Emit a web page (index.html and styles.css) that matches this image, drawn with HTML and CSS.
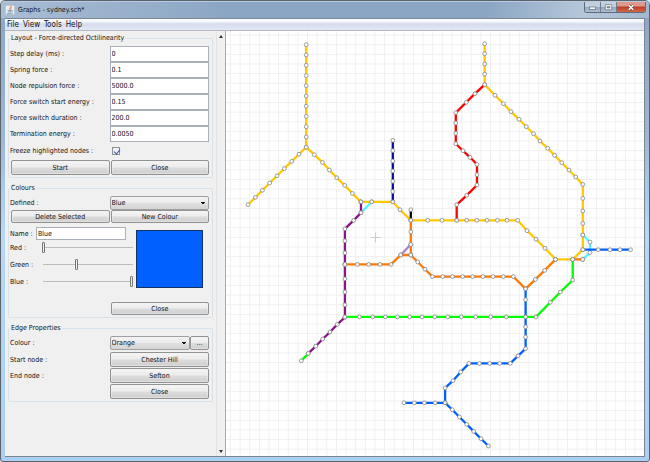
FILE: index.html
```html
<!DOCTYPE html>
<html lang="en">
<head>
<meta charset="utf-8">
<title>Graphs - sydney.sch*</title>
<link rel="stylesheet" href="styles.css">
</head>
<body>
<div class="window">
  <header class="titlebar">
    <svg class="app-icon" viewBox="0 0 10 10" aria-hidden="true">
      <rect x="0.5" y="0.5" width="9" height="9" fill="#e9eef4" stroke="#b9c6d4"/>
      <path d="M5.6 1C6.6 2.2 3.8 2.8 4.8 4.8M6.6 2.6C5.4 3.4 6 4 5.6 4.8" fill="none" stroke="#e8803a"/>
      <path d="M2.6 5.6h4.2M3 6.8h3.4M6.8 5.4c1.4 0 1 1.2-.2 1.4M2 8.4h5.6" fill="none" stroke="#6d8fae" stroke-width="0.8"/>
    </svg>
    <h1 class="title">Graphs - sydney.sch*</h1>
    <div class="controls">
      <button class="control" type="button" aria-label="Minimize"><svg viewBox="0 0 16 11"><rect x="4.5" y="5.5" width="7" height="2.5" fill="#fff" stroke="#56606e" stroke-width="0.7"/></svg></button>
      <button class="control" type="button" aria-label="Maximize"><svg viewBox="0 0 16 11"><path d="M4.5 3h7v5.5h-7zM6.5 5v1.5h3V5z" fill="#fff" fill-rule="evenodd" stroke="#56606e" stroke-width="0.7"/></svg></button>
      <button class="control control-close" type="button" aria-label="Close window"><svg viewBox="0 0 28 11"><path d="M11.5 3.5l5 5M16.5 3.5l-5 5" stroke="#5d4a55" stroke-width="3"/><path d="M11.5 3.5l5 5M16.5 3.5l-5 5" stroke="#fff" stroke-width="1.7"/></svg></button>
    </div>
  </header>
  <div class="client">
    <nav class="menubar">
      <button type="button">File</button>
      <button type="button">View</button>
      <button type="button">Tools</button>
      <button type="button">Help</button>
    </nav>
    <main class="workspace">
      <aside class="sidebar">
        <form class="panels">
          <fieldset class="group">
            <legend>Layout - Force-directed Octilinearity</legend>
            <div class="field"><label for="delay">Step delay (ms) :</label><input id="delay" type="text" value="0"></div>
            <div class="field"><label for="spring">Spring force :</label><input id="spring" type="text" value="0.1"></div>
            <div class="field"><label for="repulsion">Node repulsion force :</label><input id="repulsion" type="text" value="5000.0"></div>
            <div class="field"><label for="energy">Force switch start energy :</label><input id="energy" type="text" value="0.15"></div>
            <div class="field"><label for="duration">Force switch duration :</label><input id="duration" type="text" value="200.0"></div>
            <div class="field"><label for="termination">Termination energy :</label><input id="termination" type="text" value="0.0050"></div>
            <div class="field field-check"><label for="freeze">Freeze highlighted nodes :</label><input id="freeze" type="checkbox" checked></div>
            <div class="pair"><button class="btn" type="button">Start</button><button class="btn" type="button">Close</button></div>
          </fieldset>

          <fieldset class="group">
            <legend>Colours</legend>
            <div class="field field-select"><label for="defined">Defined :</label><select id="defined"><option>Blue</option></select></div>
            <div class="pair pair-short"><button class="btn" type="button">Delete Selected</button><button class="btn" type="button">New Colour</button></div>
            <div class="mixer">
              <div class="channels">
                <div class="channel channel-name"><label for="name">Name :</label><input id="name" type="text" value="Blue"></div>
                <div class="channel"><label for="red">Red :</label><input id="red" type="range" min="0" max="255" value="0"></div>
                <div class="channel"><label for="green">Green :</label><input id="green" type="range" min="0" max="255" value="96"></div>
                <div class="channel"><label for="blue">Blue :</label><input id="blue" type="range" min="0" max="255" value="255"></div>
              </div>
              <div class="swatch"></div>
            </div>
            <div class="pair pair-short"><span></span><button class="btn" type="button">Close</button></div>
          </fieldset>

          <fieldset class="group">
            <legend>Edge Properties</legend>
            <div class="field field-select"><label for="edge-colour">Colour :</label><div class="picker"><select id="edge-colour"><option>Orange</option></select><button class="btn btn-more" type="button">...</button></div></div>
            <div class="actions">
              <span>Start node :</span><button class="btn" type="button">Chester Hill</button>
              <span>End node :</span><button class="btn" type="button">Sefton</button>
              <span></span><button class="btn" type="button">Close</button>
            </div>
          </fieldset>
        </form>
        <div class="scroller">
          <svg viewBox="0 0 4 3" aria-hidden="true"><path d="M0 3L2 0l2 3z"/></svg>
          <svg viewBox="0 0 4 3" aria-hidden="true"><path d="M0 0l2 3 2-3z"/></svg>
        </div>
      </aside>
      <section class="canvas">
        <svg viewBox="226 31 419 425" preserveAspectRatio="xMinYMin slice" role="img" aria-label="Sydney rail network graph">
          <defs>
            <pattern id="grid" x="230" y="34.6" width="9.63" height="9.63" patternUnits="userSpaceOnUse">
              <path d="M0.5 0v9.63M0 0.5h9.63" stroke="#f0f0f0" fill="none"/>
            </pattern>
            <marker id="station" viewBox="-3 -3 6 6" markerWidth="6" markerHeight="6" markerUnits="userSpaceOnUse">
              <circle r="1.9" fill="#fff" stroke="#858585" stroke-width="0.8"/>
            </marker>
          </defs>
          <rect x="226" y="31" width="419" height="425" fill="url(#grid)"/>
          <path class="centre" d="M370.5 237.5h10M375.5 232.5v10"/>
          <g class="route">
            <path class="cyan" d="M361 212.7L371.7 201.8"/>
            <path class="mauve" d="M400.7 255L410.8 244.5"/>
            <path class="cyan" d="M582.8 235L590 242V252.6L582.8 259.4"/>
            <path class="blue" d="M582.8 249.7H598.3H610H620H630.6"/>
            <path class="yellow" d="M306.2 44.7V55V65.3V75.6V85.7V96V106.2V116.4V126.7V137V147.2L314.3 154.7L322.4 162.4L329.4 170L336.7 177.7L344.7 185.4L352.4 193.4L360.8 201.8H371.7H392.8L400 209.7L410.8 220.3H427.8H442H456.8H466.7H476.8H487H497.4H507H517.7L527 230.7L536 239.2L545 248.2L555.5 259.4H572.7L582.8 249.7V235V223.4V211V198.4V184.4L575.7 177L569 170L561.8 162.7L554.7 155.4L547.7 148.3L540 141L533.5 133.7L526.3 126.7L519 119.3L511 111.7L503.4 103.7L495 95.3L484.7 84.7V74.2V64V53.7V43.7"/>
            <path class="yellow" d="M306.2 147.2L299 154.2L291.7 161.4L284.3 168.6L277 175.8L269.7 183L262.4 190.3L255.4 197.4L248 204.7"/>
            <path class="red" d="M484.7 84.7L475 93.7L466.3 102.3L455.8 112.7V123V133.3V143.7L463 150.7L470 157.3L477 164.4V174.7V185L466.7 195.3L456.7 204.7V220.3"/>
            <path class="navy" d="M392.8 140.3V150.6V161V171V181.3V191.5V201.8"/>
            <path class="black" d="M410.8 209.7V220.3"/>
            <path class="purple" d="M361 201.8V212.7L353.7 220.4L344.9 228.8V240.8V252.8V264.4V278.8V292V304.8V317.3L337.3 324.4L330 332L322.7 339L315.7 346.2L308.3 353.4"/>
            <path class="green" d="M308.3 353.4L301.3 360.8"/>
            <path class="orange" d="M344.9 264.4H357.4H368.7H380H391L400.7 255H410.8L417.7 262L425 269.2L432.4 276.6H442.7H452.4H462.7H472.7H483H493H503.3H513.3L525.6 288.8L535.4 279.4L544.7 270.4L555.5 259.4"/>
            <path class="orange" d="M410.8 220.3V231.8V244.5V255"/>
            <path class="orange" d="M572.7 259.4H582.8"/>
            <path class="green" d="M572.7 259.4V280L560.4 292L550.3 302.3L536 316.9H525.6H506.3H490.7H475.7H461.3H447.7H434.7H422H409.7H397.4H385.4H372.7H359.4H344.9"/>
            <path class="blue" d="M525.6 288.8V299.7V316.9V326.8V337V348.7L518 355.9L510.3 363.4H499.7H489.7H479.4H469L460.7 372L453 380.7L445.1 388V402.8L452.3 409.7L459.4 417L466.7 424.3L473.7 431.4L481 438.7L488.4 446"/>
            <path class="blue" d="M445.1 402.8H435.2H424.4H414.3H404"/>
          </g>
          <g class="junctions">
            <circle cx="582.8" cy="249.7" r="1.9"/><circle cx="555.5" cy="259.4" r="1.9"/>
            <circle cx="410.8" cy="255" r="1.9"/><circle cx="344.9" cy="264.4" r="1.9"/>
          </g>
        </svg>
      </section>
    </main>
  </div>
</div>
</body>
</html>
```
FILE: styles.css
```css
* { box-sizing: border-box; }

html, body { height: 100%; }

body {
  margin: 0;
  background: #dfe5ec;
  color: #111;
  font: 7px/10px "DejaVu Sans Condensed", "DejaVu Sans", sans-serif;
}

button, input, select { font: inherit; color: inherit; margin: 0; }

.window {
  display: flex;
  flex-direction: column;
  min-height: 100%;
  padding: 0 4px 4px;
  border: 1px solid #5d636b;
  border-radius: 5px 5px 3px 3px;
  background: linear-gradient(#8ba6c4 0, #9bb8d8 30%, #b4d8f8 50%, #a9d0f2 100%);
}

.titlebar {
  display: flex;
  align-items: center;
  height: 17px;
  margin: 0 -4px;
  padding-left: 4px;
  border-top: 1px solid #b8cbe0;
  border-radius: 4px 4px 0 0;
  background: linear-gradient(100deg, #a9bdd5 0, #8ba6c4 35%, #8ba6c4 75%, #b6c7da 90%, #a3b8d0 100%);
}

.app-icon { width: 10px; height: 10px; }

.title {
  margin: 0 auto 0 3px;
  font-size: 7px;
  font-weight: normal;
}

.controls {
  display: flex;
  align-self: flex-start;
  margin-right: 3px;
  border: 1px solid #5f6b7a;
  border-top: 0;
  border-radius: 0 0 3px 3px;
  overflow: hidden;
}

.control {
  display: block;
  width: 16px;
  height: 10px;
  padding: 0;
  border: 0;
  border-right: 1px solid #6f7c8d;
  background: linear-gradient(#c3d0df 45%, #92a5bb 50%, #adbfd2);
}

.control svg { display: block; width: 100%; height: 100%; }

.control-close {
  width: 28px;
  border-right: 0;
  background: linear-gradient(#dd9a8c 40%, #bd3d25 50%, #d2694c);
}

.client {
  display: flex;
  flex: 1;
  flex-direction: column;
  border: 1px solid #7b8794;
  border-left-width: 0;
  background: #f0f0f0;
}

.menubar {
  display: flex;
  gap: 4px;
  height: 12px;
  padding-left: 2px;
  border-bottom: 1px solid #b5b8be;
  background: linear-gradient(#fff 0, #f2f5fb 25%, #d6dcec 45%, #e0e7f5 100%);
  font-size: 8px;
}

.menubar button { padding: 0; border: 0; background: none; }

.workspace { display: flex; flex: 1; }

.sidebar { display: flex; flex: 0 0 220px; }

.panels {
  display: flex;
  flex: 1;
  flex-direction: column;
  gap: 5px;
  padding: 2px 3px 0;
}

.group {
  min-width: 0;
  margin: 0;
  padding: 3px 3px 2px 1px;
  border: 1px solid #d9e2e8;
  border-radius: 2px;
}

.group legend { margin-left: 0; padding: 0 1px; height: 10px; }

.field {
  display: grid;
  grid-template-columns: 1fr 1fr;
  align-items: center;
  height: 16px;
}

.field-check { height: 18px; }
.field-select { height: 14px; }

input[type="text"] {
  width: 100%;
  height: 100%;
  min-width: 0;
  padding: 0 1px;
  border: 1px solid #aab0b8;
  background: #fff;
}

input[type="checkbox"] {
  width: 8px;
  height: 8px;
  margin-left: 2px;
  appearance: none;
  border: 1px solid #8e8f8f;
  background: #eef1f6;
}

input[type="checkbox"]:checked::after {
  content: "";
  display: block;
  width: 3px;
  height: 5px;
  margin: 0 0 0 2px;
  border: solid #3f57a0;
  border-width: 0 1px 1px 0;
  transform: rotate(40deg);
}

.pair {
  display: grid;
  grid-template-columns: 1fr 1fr;
  gap: 1px;
  height: 15px;
  padding-left: 1px;
}

.pair-short { height: 13px; }

.btn {
  padding: 0;
  border: 1px solid #929292;
  border-radius: 2px;
  background: linear-gradient(#f4f4f4 0, #ececec 48%, #dcdcdc 52%, #cfcfcf 100%);
  box-shadow: inset 0 0 0 1px #f5f5f566;
  line-height: 8px;
}

select {
  width: 100%;
  height: 100%;
  padding: 0 1px;
  appearance: none;
  border: 1px solid #a0a0a0;
  border-radius: 2px;
  background:
    linear-gradient(to bottom right, #111 50%, transparent 50%) calc(100% - 3px) 5px / 2px 3px no-repeat,
    linear-gradient(to bottom left, #111 50%, transparent 50%) calc(100% - 5px) 5px / 2px 3px no-repeat,
    linear-gradient(#f3f3f3 0, #ebebeb 48%, #dfdfdf 52%, #d4d4d4 100%);
}

.mixer {
  display: flex;
  gap: 3px;
  margin: 4px 0 12px;
}

.channels { flex: 1; }

.channel {
  display: grid;
  grid-template-columns: 32px 1fr;
  align-items: center;
  height: 17px;
}

.channel-name { grid-template-columns: 26px 1fr; height: 13px; margin-right: 7px; margin-bottom: -1px; }

input[type="range"] {
  width: 100%;
  height: 11px;
  appearance: none;
  background: linear-gradient(#bcbcbc, #bcbcbc) 1px 5px / 100% 1px no-repeat;
}

input[type="range"]::-webkit-slider-thumb {
  appearance: none;
  width: 3px;
  height: 11px;
  border: 1px solid #777;
  border-radius: 1px;
  background: #eee;
}

.swatch {
  width: 67px;
  height: 58px;
  margin: 3px 6px 0 0;
  border: 1px solid #16335f;
  background: #0060ff;
}

.picker {
  display: grid;
  grid-template-columns: 1fr 19px;
  height: 100%;
}

.actions {
  display: grid;
  grid-template-columns: 1fr 1fr;
  grid-auto-rows: 15px;
  align-items: center;
  gap: 1px;
  margin-top: 2px;
}

.actions .btn { height: 100%; }

.scroller {
  display: flex;
  flex-direction: column;
  align-items: center;
  justify-content: space-between;
  width: 9px;
  padding: 4px 0 3px;
  border-left: 1px solid #e4e4e4;
}

.scroller svg { width: 4px; height: 3px; fill: #333; }

.canvas {
  flex: 1;
  min-width: 0;
  border-left: 1px solid #a8a8a8;
  background: #fff;
}

.canvas > svg { display: block; width: 100%; height: 100%; }

.centre { fill: none; stroke: #ccc; }

.route path {
  fill: none;
  stroke-width: 2.3;
  marker-start: url(#station);
  marker-mid: url(#station);
  marker-end: url(#station);
}

.route .yellow { stroke: #ffc800; }
.route .red { stroke: #f00; }
.route .navy { stroke: #0a0aa0; }
.route .black { stroke: #000; }
.route .purple { stroke: #8a1488; }
.route .green { stroke: #0f0; }
.route .orange { stroke: #ff7800; }
.route .blue { stroke: #0060ff; }
.route .cyan { stroke: #50f5fa; }
.route .mauve { stroke: #a582cc; }

.junctions circle { fill: #fff; stroke: #858585; stroke-width: 0.8; }
```
